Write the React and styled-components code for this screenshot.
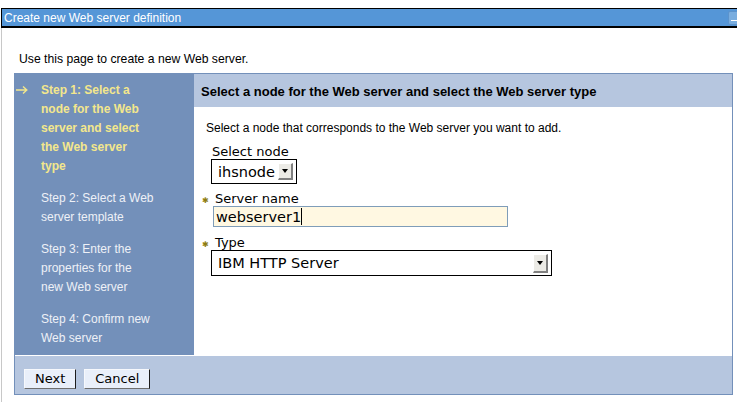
import React from 'react';
import styled, { createGlobalStyle } from 'styled-components';

const GlobalStyle = createGlobalStyle`
  html, body {
    margin: 0;
    padding: 0;
    background: #fff;
  }
  body {
    font-family: "Liberation Sans", Arial, sans-serif;
    font-size: 12px;
    color: #000;
  }
`;

const TitleBar = styled.div`
  margin: 8px 0 0 1px;
  height: 17px;
  border-top: 1px solid #000;
  border-bottom: 2px solid #000;
  border-left: 1px solid #000;
  background: #5596d7;
  color: #fff;
  display: flex;
  align-items: center;
  justify-content: space-between;
  padding-left: 2px;
  overflow: hidden;
  font-size: 12px;
`;

const MinButton = styled.div`
  position: relative;
  width: 12px;
  height: 12px;
  margin-right: -5px;
  background: #79addf;
  border: 1px solid #5c93cc;
  border-radius: 2px;
  &::after {
    content: '';
    position: absolute;
    left: 2px;
    right: 2px;
    bottom: 3px;
    height: 1px;
    background: #fff;
  }
`;

const Frame = styled.div`
  margin-left: 1px;
  border-left: 1px solid #c8c8c8;
  padding: 24px 4px 0 12px;
  min-height: calc(100vh - 28px);
  box-sizing: border-box;
`;

const Intro = styled.div`
  line-height: 14px;
  padding-left: 5px;
  font-size: 12.2px;
`;

const Wizard = styled.div`
  margin-top: 7px;
  border: 1px solid #7390ba;
  display: grid;
  grid-template-columns: 179px 1fr;
  grid-template-rows: 281px auto;
`;

const Steps = styled.div`
  background: #7390ba;
  padding-top: 7px;
`;

const Step = styled.div`
  display: flex;
  margin-bottom: 13px;
`;

const Marker = styled.div`
  width: 26px;
  flex: none;
  padding: 2px 0 0 1px;
  box-sizing: border-box;
`;

const StepText = styled.div`
  line-height: 19px;
  white-space: nowrap;
  color: ${(p) => (p.$active ? '#f3e78c' : '#eef1f7')};
  font-weight: ${(p) => (p.$active ? 'bold' : 'normal')};
`;

const Panel = styled.div`
  background: #fff;
  display: flex;
  flex-direction: column;
`;

const PanelHeader = styled.div`
  height: 33px;
  box-sizing: border-box;
  padding: 2px 0 0 7px;
  background: #b6c6df;
  display: flex;
  align-items: center;
  font-size: 13px;
  font-weight: bold;
`;

const PanelBody = styled.div`
  padding: 14px 8px 0 8px;
`;

const Hint = styled.div`
  line-height: 14px;
  padding-left: 4px;
  margin-bottom: 9px;
`;

const Field = styled.div`
  display: flex;
  margin-top: ${(p) => p.$gap || 0}px;
`;

const Required = styled.div`
  width: 10px;
  flex: none;
  color: #8f7d10;
  font-family: "DejaVu Sans", sans-serif;
  font-size: 8px;
  line-height: 15px;
  padding-top: 2px;
  box-sizing: border-box;
`;

const FieldBody = styled.div`
  display: flex;
  flex-direction: column;
  align-items: flex-start;
`;

const Label = styled.div`
  font-family: "DejaVu Sans", sans-serif;
  font-size: 13px;
  line-height: 15px;
  padding-left: ${(p) => p.$indent || 0}px;
`;

const Select = styled.div`
  width: ${(p) => p.$width}px;
  height: ${(p) => p.$height || 25}px;
  margin-left: -1px;
  box-sizing: border-box;
  border: 1px solid #000;
  display: flex;
  align-items: center;
  justify-content: space-between;
  padding: 0 3px 0 6px;
  font-family: "DejaVu Sans", sans-serif;
  font-size: 14.5px;
  background: #fff;
`;

const DropButton = styled.div`
  width: 15px;
  height: ${(p) => p.$height || 17}px;
  box-sizing: border-box;
  background: #ecebe6;
  border-top: 1px solid #fff;
  border-left: 1px solid #fff;
  border-right: 2px solid #808080;
  border-bottom: 2px solid #808080;
  display: flex;
  align-items: center;
  justify-content: center;
  &::after {
    content: '';
    border-left: 3px solid transparent;
    border-right: 3px solid transparent;
    border-top: 4px solid #000;
  }
`;

const TextBox = styled.div`
  width: 295px;
  height: 21px;
  margin-left: 1px;
  box-sizing: border-box;
  border: 1px solid #7f9db9;
  background: #fff8e2;
  padding-left: 2px;
  display: flex;
  align-items: center;
  font-family: "DejaVu Sans", sans-serif;
  font-size: 14.5px;
`;

const Caret = styled.span`
  width: 1px;
  height: 17px;
  background: #000;
`;

const Footer = styled.div`
  grid-column: 1 / -1;
  height: 39px;
  box-sizing: border-box;
  border-top: 1px solid #fff;
  background: #b6c6df;
  padding: 13px 0 0 9px;
  display: flex;
  align-items: flex-start;
  gap: 8px;
`;

const Button = styled.button`
  height: 20px;
  padding: 0 10px;
  margin: 0;
  background: #e9effa;
  border: 1px solid;
  border-color: #f6f8fc #1c1c1c #6e6e6e #f6f8fc;
  font-family: "DejaVu Sans", sans-serif;
  font-size: 13px;
  line-height: 18px;
  color: #000;
`;

const Arrow = () => (
  <svg width="12" height="8" viewBox="0 0 12 8">
    <path d="M0 4 H10.5 M7 0.5 L10.8 4 L7 7.5" fill="none" stroke="#f3e78c" strokeWidth="1.4" />
  </svg>
);

const steps = [
  ['Step 1: Select a', 'node for the Web', 'server and select', 'the Web server', 'type'],
  ['Step 2: Select a Web', 'server template'],
  ['Step 3: Enter the', 'properties for the', 'new Web server'],
  ['Step 4: Confirm new', 'Web server'],
];

const App = () => {
  return (
    <>
      <GlobalStyle />
      <TitleBar>
        <span>Create new Web server definition</span>
        <MinButton />
      </TitleBar>
      <Frame>
        <Intro>Use this page to create a new Web server.</Intro>
        <Wizard>
          <Steps>
            {steps.map((lines, i) => (
              <Step key={i}>
                <Marker>{i === 0 && <Arrow />}</Marker>
                <StepText $active={i === 0}>
                  {lines.map((l) => (
                    <div key={l}>{l}</div>
                  ))}
                </StepText>
              </Step>
            ))}
          </Steps>
          <Panel>
            <PanelHeader>Select a node for the Web server and select the Web server type</PanelHeader>
            <PanelBody>
              <Hint>Select a node that corresponds to the Web server you want to add.</Hint>
              <Field>
                <Required />
                <FieldBody>
                  <Label>Select node</Label>
                  <Select $width={86}>
                    ihsnode
                    <DropButton />
                  </Select>
                </FieldBody>
              </Field>
              <Field $gap={7}>
                <Required>✱</Required>
                <FieldBody>
                  <Label $indent={3}>Server name</Label>
                  <TextBox>
                    webserver1
                    <Caret />
                  </TextBox>
                </FieldBody>
              </Field>
              <Field $gap={8}>
                <Required>✱</Required>
                <FieldBody>
                  <Label $indent={3}>Type</Label>
                  <Select $width={341} $height={26}>
                    IBM HTTP Server
                    <DropButton $height={19} />
                  </Select>
                </FieldBody>
              </Field>
            </PanelBody>
          </Panel>
          <Footer>
            <Button>Next</Button>
            <Button>Cancel</Button>
          </Footer>
        </Wizard>
      </Frame>
    </>
  );
};

export default App;
